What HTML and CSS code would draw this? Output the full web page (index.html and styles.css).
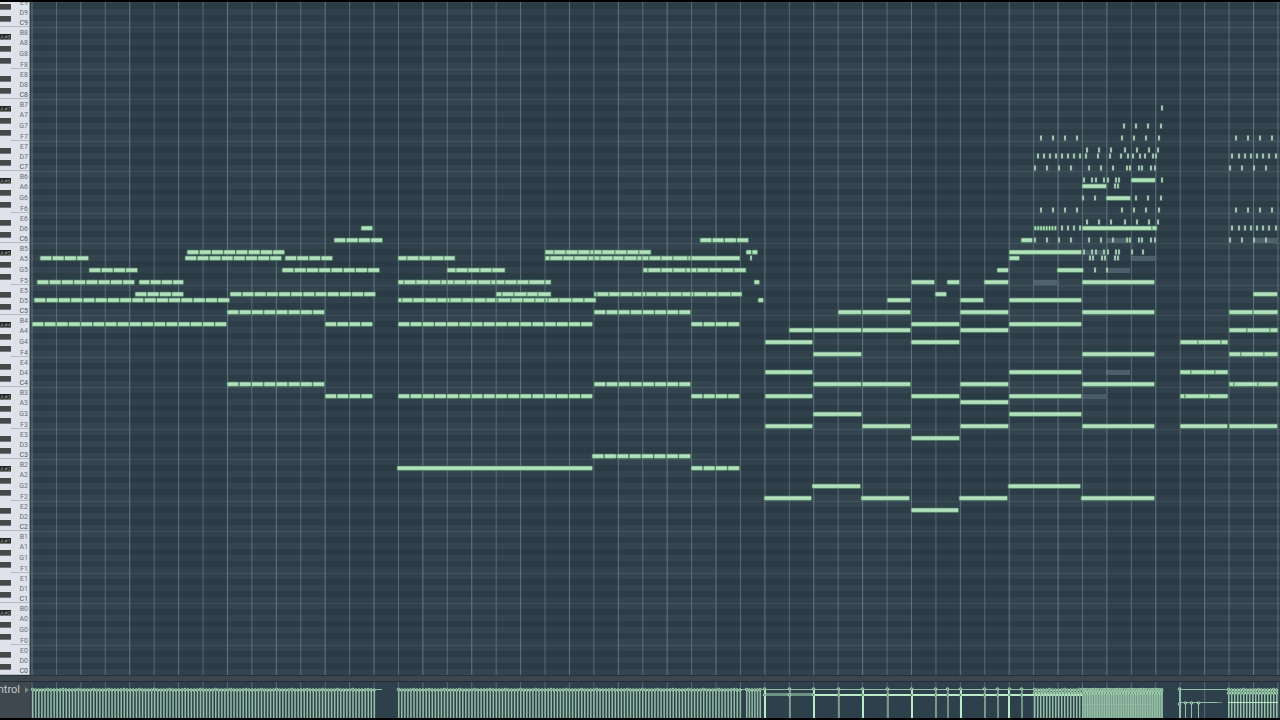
FILE: index.html
```
<!DOCTYPE html>
<html lang="en">
<head>
    <meta charset="UTF-8">
    <meta name="viewport" content="width=device-width, initial-scale=1.0">
    <title>Piano roll</title>
    <link rel="stylesheet" href="styles.css">
</head>
<body>
    <main class="piano-roll">
        <div class="keyboard" id="keyboard"></div>
        <div class="grid">
            <svg class="notes" id="notes" height="720">
                <defs>
                    <pattern id="bars" width="24.43" height="720" x="1.5" patternUnits="userSpaceOnUse">
                        <rect class="bar-line" width="1" height="720"/>
                    </pattern>
                    <pattern id="beats" width="48.86" height="720" x="1.5" patternUnits="userSpaceOnUse">
                        <rect class="beat-line" width="1" height="720"/>
                    </pattern>
                    <pattern id="shade" width="195.44" height="720" x="-96" patternUnits="userSpaceOnUse">
                        <rect class="bar-shade" width="97.72" height="720"/>
                    </pattern>
                    <pattern id="rows" width="100" height="72" patternUnits="userSpaceOnUse">
                        <rect class="row-line" y="0" width="100" height="1"/>
                        <rect class="row-dark" y="6" width="100" height="6"/>
                        <rect class="row-dark" y="18" width="100" height="6"/>
                        <rect class="row-dark" y="30" width="100" height="6"/>
                        <rect class="row-line" y="42" width="100" height="1"/>
                        <rect class="row-dark" y="48" width="100" height="6"/>
                        <rect class="row-dark" y="60" width="100" height="6"/>
                    </pattern>
                    <linearGradient id="note-fill" x2="0" y2="1">
                        <stop offset="0" stop-color="#c3edca"/>
                        <stop offset="1" stop-color="#9fd2ab"/>
                    </linearGradient>
                </defs>
                <rect width="100%" height="720" fill="url(#rows)"/>
                <rect width="100%" height="720" fill="url(#shade)"/>
                <rect width="100%" height="720" fill="url(#bars)"/>
                <rect width="100%" height="720" fill="url(#beats)"/>
            </svg>
        </div>
    </main>
    <div class="splitter"></div>
    <section class="control">
        <div class="control-label"><span>Control</span><svg class="arrow" width="4" height="6" viewBox="0 0 4 6"><path d="M0 0L4 3L0 6Z"/></svg></div>
        <div class="events">
            <svg id="events" height="36">
                <rect width="100%" height="36" fill="url(#bars)"/>
            </svg>
        </div>
    </section>

    <script src="roll.js"></script>
</body>
</html>
```
FILE: styles.css
```
*{
    box-sizing: border-box;
    margin: 0;
    padding: 0;
}

body{
    height: 100vh;
    display: flex;
    flex-direction: column;
    overflow: hidden;
    background-color: #30424d;
    border-top: 2px solid #000;
    border-bottom: 2px solid #000;
    font-family: Roboto, "Liberation Sans", sans-serif;
}

.piano-roll{
    flex: 1;
    min-height: 0;
    display: grid;
    grid-template-columns: 30px 1fr;
    overflow: hidden;
}

.keyboard, .grid{
    min-height: 0;
    display: flex;
    flex-direction: column;
    justify-content: flex-end;
    overflow: hidden;
}

/* keys */
.keyboard{
    background-color: #dfe2ea;
    border-right: 1px solid #8a97a3;
}

.octave{
    flex: none;
    display: grid;
    grid-template-columns: 11px 1fr;
    height: 72px;
    border-bottom: 1px solid #b4bcc8;
}

.black-keys{
    display: flex;
    flex-direction: column;
    padding-top: 7px;
}

.black-key{
    display: flex;
    justify-content: flex-end;
    align-items: center;
    height: 6px;
    margin-bottom: 6px;
    background-color: #484848;
    border-bottom: 1px solid #77787c;
    color: #858585;
    font-size: 6px;
    line-height: 6px;
    overflow: hidden;
}

.black-key.named{
    background-color: #222;
}

.black-key.last-of-group{
    margin-bottom: 12px;
}

.white-keys{
    display: grid;
    grid-template-rows: 10px 11px 11px 10px 10px 10px 9px;
}

.white-key{
    padding-right: 1px;
    text-align: right;
    color: #686d77;
    font-size: 7px;
    line-height: 12px;
}

.white-key.split{
    border-bottom: 1px solid #b4bcc8;
}

.white-key.root{
    color: #4c515a;
}

/* note grid */
.grid{
    background-color: #35454f;
}

.notes{
    flex: none;
    width: 100%;
}

.row-dark{
    fill: #2d3d48;
}

.row-line{
    fill: #42545f;
}

.bar-shade{
    fill: #1c303c;
    opacity: 0.2;
}

.bar-line{
    fill: #a0b9c2;
    opacity: 0.35;
}

.beat-line{
    fill: #a0b9c2;
    opacity: 0.12;
}

.note{
    fill: url(#note-fill);
    stroke: #4a7a62;
    stroke-opacity: 0.8;
}

.tick{
    fill: #b9dcc4;
    stroke: #4f7568;
    stroke-opacity: 0.5;
}

.ghost{
    fill: #8097a5;
    opacity: 0.35;
}

/* control lane */
.splitter{
    flex: none;
    height: 7px;
    background-color: #3c474d;
    border-top: 1px solid #263239;
    border-bottom: 1px solid #222f38;
}

.control{
    flex: none;
    display: grid;
    grid-template-columns: 30px 1fr;
    height: 36px;
    background-color: #3f484e;
}

.control-label{
    display: flex;
    justify-content: flex-end;
    column-gap: 5px;
    padding-top: 1px;
    padding-right: 1px;
    overflow: hidden;
    color: #c3c9cd;
    font-size: 11px;
    line-height: 14px;
}

.arrow{
    flex: none;
    margin-top: 4px;
    fill: #7c868c;
}

.events{
    background-color: #2e404b;
    overflow: hidden;
}

.events svg{
    display: block;
    width: 100%;
}

.stem, .tail{
    fill: #94bfa5;
}

.stem.strong, .tail.strong{
    fill: #bcebc7;
}

.stem.soft, .tail.soft{
    opacity: 0.65;
}

.dense{
    fill: #8fb59d;
    opacity: 0.7;
}

.head{
    fill: #648f78;
    stroke: #a3d3b1;
}
```
FILE: roll.js
```
const KEYS_WIDTH = 30;
const ROW = 6;
const OCTAVES = 10;
const SCALE = ['C', 'C#', 'D', 'D#', 'E', 'F', 'F#', 'G', 'G#', 'A', 'A#', 'B'];

// from-to, /n cuts into n equal notes, :a,b cuts at given places,
// a lone number is a very short note, g is a ghost note of another channel
const notes = {
    'A#7': '1162',
    'G7': '1124 1136 1148 1161',
    'F7': '1041 1053 1065 1077 1122 1134 1146 1159 1236 1248 1260 1272',
    'D#7': '1087 1099 1111 1125 1137 1149 1158',
    'D7': '1038 1044 1050 1056 1062 1068 1074 1080 1086 1098 1110 1121 1128 1133 1140 1145 1153 1156 1232 1239 1245 1251 1257 1263 1269 1276',
    'C7': '1035 1047 1059 1071 1089 1101 1113 1127 1130 1139 1142 1151 1155 1230 1242 1254 1266',
    'A#6': '1084 1092 1096 1104 1108 1116 1119 1131-1156 1162',
    'A6': '1082-1107 1115 1118',
    'G6': '1083 1095 1106-1131 1136 1148 1161',
    'F6': '1041 1053 1065 1077 1122 1134 1146 1159 1236 1248 1260 1272',
    'D#6': '1087 1099 1111 1125 1137 1149 1158',
    'D6': '361-373 1034-1057/8 1062 1068 1074 1080 1082-1157:1152 1232 1239 1245 1251 1257 1263 1269 1276',
    'C6': 'g1106-1130 g1253-1277 334-383/4 700-749/4 1021-1033 1035 1047 1059 1071 1089 1101 1113 1127 1130 1139 1142 1151 1155 1230 1242 1254 1266',
    'A#5': 'g1082-1106 187-285/8 545-651:554,566,578,590,594,602,615,627,639 746-752 752-758 1009-1082 1084 1092 1096 1104 1108 1116 1119 1132 1143',
    'A5': 'g1131-1155 40-89/4 185-282/8 285-333/4 398-455:407,419,431,444 545-740:550,563,574,588,594,600,613,624,637,642,649,661,673,688,691 751 1009-1020 1090 1093 1102 1105 1115 1118',
    'G5': 'g1106-1130 89-138/4 282-380/8 447-505:456,468,480,492 643-746:648,661,673,686,691,697,709,722,734 997-1009 1057-1084 1095 1107',
    'F5': 'g1034-1057 37-135/8 139-184/4 398-551:404,416,429,441,447,454,466,478,491,496,505,517,529,545 754-760 911-935 947-960 984-1009 1082-1155',
    'D#5': '135-184/4 230-376/12 496-551:502,514,527,538 594-742:597,609,620,633,642,646,657,670,682,691,694,707,718,731 935-947 1253-1278',
    'D5': '34-230/16 398-596:402,413,425,437,447,450,462,474,486,496,498,511,523,535,545,548,559,572,584 758-764 887-911 960-984 1009-1082',
    'C5': '227-325/8 594-691/8 838-862 862-911 960-1009 1082-1155 1229-1278:1253',
    'A#4': '32-227/16 325-373/4 398-593/16 691-740/4 911-960 1009-1082',
    'A4': '789-813 813-862 862-911 960-1009 1229-1278:1247,1270',
    'G4': '765-813 911-960 1180-1228:1198,1221',
    'F4': '813-862 1082-1155 1229-1278:1241,1264',
    'D4': 'g1106-1130 765-813 1009-1082 1180-1228:1191,1215',
    'C4': '227-325/8 594-691/8 813-862 862-911 960-1009 1082-1155 1229-1278:1234,1258',
    'A#3': 'g1082-1106 325-373/4 398-593/16 691-740/4 765-813 911-960 1009-1082 1180-1228:1185,1209',
    'A3': '960-1009',
    'G3': '813-862 1009-1082',
    'F3': '765-813 862-911 960-1009 1082-1155 1180-1228 1229-1278',
    'D#3': '911-960',
    'C3': '592-691/8',
    'A#2': '397-593 691-740/4',
    'G2': '812-861 1008-1081',
    'F2': '764-812 861-910 959-1008 1081-1155',
    'D#2': '911-959'
};

function add(parent, tag, attrs) {
    const el = document.createElementNS('http://www.w3.org/2000/svg', tag);
    for (const name in attrs) {
        el.setAttribute(name, attrs[name]);
    }
    parent.appendChild(el);
}

function drawKeyboard() {
    const keyboard = document.getElementById('keyboard');
    for (let octave = OCTAVES - 1; octave >= 0; octave--) {
        const top = octave === OCTAVES - 1;
        const white = ['B', 'A', 'G', 'F', 'E', 'D', 'C'].map(key => {
            const extra = key === 'C' ? ' root' : key === 'F' ? ' split' : '';
            const label = top && 'BAGF'.includes(key) ? '' : key + octave;
            return `<div class="white-key${extra}">${label}</div>`;
        }).join('');
        keyboard.insertAdjacentHTML('beforeend', `
            <div class="octave">
                <div class="black-keys">
                    <div class="black-key named">${top ? '' : 'A#' + octave}</div>
                    <div class="black-key"></div>
                    <div class="black-key last-of-group"></div>
                    <div class="black-key"></div>
                    <div class="black-key"></div>
                </div>
                <div class="white-keys">${white}</div>
            </div>`);
    }
}

function rowTop(name) {
    const octave = Number(name.slice(-1));
    const semitone = octave * 12 + SCALE.indexOf(name.slice(0, -1));
    return (OCTAVES * 12 - semitone - 1) * ROW;
}

function drawNotes() {
    const svg = document.getElementById('notes');
    for (const name in notes) {
        const y = rowTop(name);
        notes[name].split(' ').forEach(item => {
            const ghost = item[0] === 'g';
            const [range, cuts] = item.replace('g', '').split(':');
            const [span, count] = range.split('/');
            const [from, to] = span.split('-').map(Number);
            if (!to) {
                add(svg, 'rect', {class: 'tick', x: from - KEYS_WIDTH - 1, y: y + 0.5, width: 2, height: 5});
                return;
            }
            if (ghost) {
                add(svg, 'rect', {class: 'ghost', x: from - KEYS_WIDTH, y: y + 1, width: to - from, height: 5});
                return;
            }
            let edges = [from];
            if (cuts) {
                edges = edges.concat(cuts.split(',').map(Number));
            }
            for (let i = 1; i < (count || 1); i++) {
                edges.push(from + (to - from) * i / count);
            }
            edges.push(to);
            for (let i = 0; i < edges.length - 1; i++) {
                add(svg, 'rect', {
                    class: 'note', rx: cuts ? 0 : 1,
                    x: edges[i] - KEYS_WIDTH, y: y + 1,
                    width: edges[i + 1] - edges[i] - (cuts ? 0 : 0.4), height: 4.5
                });
            }
        });
    }
}

const events = document.getElementById('events');

function stem(x, top, type, width) {
    add(events, 'rect', {class: 'stem ' + type, x: x - KEYS_WIDTH, y: top, width: width || 1, height: 36 - top});
}

function tail(from, to, y, type, height) {
    add(events, 'rect', {class: 'tail ' + type, x: from - KEYS_WIDTH, y: y, width: to - from, height: height || 1});
}

function head(x, y) {
    add(events, 'circle', {class: 'head', cx: x - KEYS_WIDTH + 0.5, cy: y, r: 1.3});
}

function stemRun(from, to, step, top) {
    let i = 0;
    for (let x = from; x < to; x += step) {
        stem(x, top, '', 1.5);
        head(x, top - (i * 7 % 5 === 0 ? 0.5 : 0));
        i++;
    }
}

function drawEvents() {
    tail(32, 382, 7, '', 1);
    tail(398, 764, 7, '', 1);
    stemRun(32, 374, 3.05, 8);
    stemRun(398, 740, 3.05, 8);
    stemRun(746, 760, 2.7, 8);

    // chords
    tail(764, 1034, 7, '', 1);
    tail(764, 813, 11, 'soft', 3);
    tail(813, 1082, 12, 'strong', 2);
    [764, 813, 862, 911, 960, 1008].forEach(x => stem(x, 7, 'strong', 2));
    [789, 838, 887, 935, 947, 984, 997, 1021].forEach(x => stem(x, 7, 'soft', 2));
    [764, 789, 813, 838, 862, 887, 911, 935, 947, 960, 984, 997, 1009, 1021].forEach(x => {
        head(x, 7);
        head(x, 13);
    });

    // fast passage
    stemRun(1034, 1082, 3, 8);
    add(events, 'rect', {class: 'dense', x: 1082 - KEYS_WIDTH, y: 6, width: 81, height: 30});
    stemRun(1082, 1163, 2.4, 8);
    for (let x = 1034; x < 1163; x += 3) {
        head(x, 11);
    }
    tail(1082, 1155, 22, 'soft', 1);

    // ending
    tail(1180, 1278, 7, '', 1);
    tail(1180, 1217, 20, '', 1);
    tail(1217, 1222, 20, 'soft', 1);
    stem(1179, 7, '', 2);
    [1185, 1191, 1198].forEach(x => {
        stem(x, 21, '', 1);
        head(x, 21);
    });
    head(1179, 7);
    head(1179, 22);
    stemRun(1228, 1277, 3, 8);
    for (let x = 1228; x < 1277; x += 3) {
        head(x, 11);
    }
    tail(1228, 1278, 20, 'strong', 1);
}

drawKeyboard();
drawNotes();
drawEvents();
```
